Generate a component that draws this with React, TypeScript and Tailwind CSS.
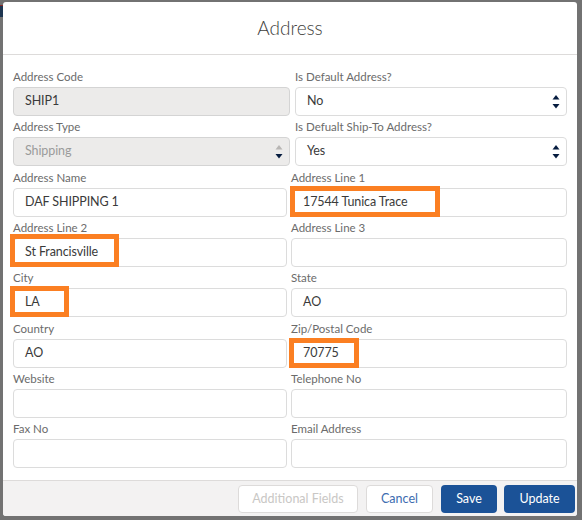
import React from "react";

type Box = { left: number; top: number; width: number; height: number };

const FONT = { fontFamily: "Lato, 'Open Sans', Arial, sans-serif" };

function Arrows({ disabled }: { disabled?: boolean }) {
  return (
    <svg width="8" height="14" viewBox="0 0 8 14" className="shrink-0">
      <polygon points="4,0 7.5,4.5 0.5,4.5" fill={disabled ? "#b8b6b4" : "#061c3f"} />
      <polygon points="0.5,9 7.5,9 4,13.5" fill="#061c3f" />
    </svg>
  );
}

function Field({
  label,
  value,
  disabled,
  select,
  mark,
}: {
  label: string;
  value?: string;
  disabled?: boolean;
  select?: boolean;
  mark?: Box;
}) {
  return (
    <div className="flex flex-col">
      <div className="h-[20px] leading-[20px] text-[11.5px] text-[#6b6b6b] whitespace-nowrap">{label}</div>
      <div
        className={
          "relative h-[29px] flex items-center justify-between rounded-[4px] border pl-[11px] pr-[6px] text-[12.5px] tracking-[-0.1px] " +
          (disabled ? "bg-[#ecebea] border-[#d4d4d4]" : "bg-white border-[#dcdcdc]")
        }
      >
        <span className={disabled && select ? "text-[#9b9b9b]" : "text-[#3a3a3a]"}>{value}</span>
        {select && <Arrows disabled={disabled} />}
        {mark && (
          <div
            className="absolute border-[5px] border-[#fb7f22]"
            style={{ left: mark.left, top: mark.top, width: mark.width, height: mark.height }}
          />
        )}
      </div>
    </div>
  );
}

export default function App() {
  return (
    <div className="relative w-[582px] h-[520px] bg-[#727272] pl-[3px] pt-[2px] overflow-hidden" style={FONT}>
      {/* bits of the page behind the overlay */}
      <div className="absolute left-0 top-[5px] w-[3px] h-[1px] bg-[#8a2a2a]" />
      <div className="absolute left-0 top-[6px] w-[3px] h-[11px] bg-[#1e3550]" />

      <div className="w-[574px] h-[514px] bg-white rounded-[3px] flex flex-col overflow-hidden">
        {/* header */}
        <div className="h-[53px] shrink-0 flex items-center justify-center border-b border-[#dddbda]">
          <h2 className="text-[19px] font-light text-[#3e3e3c] mt-[1px]">Address</h2>
        </div>

        {/* body */}
        <div className="flex-1 flex flex-col gap-y-[1.33px] px-[10px] pt-[12px]">
          <div className="grid grid-cols-[277px_272px] gap-x-[5px]">
            <Field label="Address Code" value="SHIP1" disabled />
            <Field label="Is Default Address?" value="No" select />
          </div>
          <div className="grid grid-cols-[277px_272px] gap-x-[5px]">
            <Field label="Address Type" value="Shipping" disabled select />
            <Field label="Is Defualt Ship-To Address?" value="Yes" select />
          </div>
          <div className="grid grid-cols-[274px_276px] gap-x-[4px]">
            <Field label="Address Name" value="DAF SHIPPING 1" />
            <Field
              label="Address Line 1"
              value="17544 Tunica Trace"
              mark={{ left: -2, top: -3, width: 150, height: 31 }}
            />
          </div>
          <div className="grid grid-cols-[274px_276px] gap-x-[4px]">
            <Field
              label="Address Line 2"
              value="St Francisville"
              mark={{ left: -4, top: -5, width: 109, height: 33 }}
            />
            <Field label="Address Line 3" />
          </div>
          <div className="grid grid-cols-[274px_276px] gap-x-[4px]">
            <Field label="City" value="LA" mark={{ left: -4, top: -3, width: 59, height: 31 }} />
            <Field label="State" value="AO" />
          </div>
          <div className="grid grid-cols-[274px_276px] gap-x-[4px]">
            <Field label="Country" value="AO" />
            <Field
              label="Zip/Postal Code"
              value="70775"
              mark={{ left: -3, top: -2, width: 70, height: 30 }}
            />
          </div>
          <div className="grid grid-cols-[274px_276px] gap-x-[4px]">
            <Field label="Website" />
            <Field label="Telephone No" />
          </div>
          <div className="grid grid-cols-[274px_276px] gap-x-[4px]">
            <Field label="Fax No" />
            <Field label="Email Address" />
          </div>
        </div>

        {/* footer */}
        <div className="h-[36px] shrink-0 bg-[#f3f2f2] border-t border-[#dddbda] flex items-start justify-end gap-[8px] pt-[4px] pr-[2px] text-[12.5px]">
          <button className="h-[28px] w-[120px] rounded-[4px] border border-[#dddbda] bg-white text-[#c9c7c5]">
            Additional Fields
          </button>
          <button className="h-[28px] w-[67px] rounded-[4px] border border-[#dddbda] bg-white text-[#3d6cb0]">
            Cancel
          </button>
          <button className="h-[28px] w-[56px] rounded-[4px] bg-[#1b5297] text-white">Save</button>
          <button className="h-[28px] w-[71px] -ml-[1px] rounded-[4px] bg-[#1b5297] text-white">Update</button>
        </div>
      </div>
    </div>
  );
}
